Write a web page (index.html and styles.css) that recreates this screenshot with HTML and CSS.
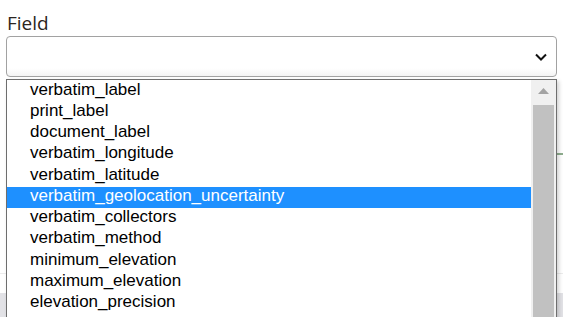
FILE: index.html
```html
<!DOCTYPE html>
<html>
<head>
<meta charset="utf-8">
<link rel="stylesheet" href="styles.css">
</head>
<body>
<div class="page">
  <div class="field-label">Field</div>
  <div class="select">
    <svg class="chevron" width="12" height="8" viewBox="0 0 12 8"><path d="M1 1.5 L6 6.5 L11 1.5" fill="none" stroke="#111" stroke-width="2"/></svg>
  </div>
  <div class="behind">
    <div class="rule-green"></div>
    <div class="rule-faint"></div>
    <div class="band"></div>
  </div>
  <div class="popup">
    <ul class="options">
      <li class="opt">verbatim_label</li>
      <li class="opt">print_label</li>
      <li class="opt">document_label</li>
      <li class="opt">verbatim_longitude</li>
      <li class="opt">verbatim_latitude</li>
      <li class="opt selected">verbatim_geolocation_uncertainty</li>
      <li class="opt">verbatim_collectors</li>
      <li class="opt">verbatim_method</li>
      <li class="opt">minimum_elevation</li>
      <li class="opt">maximum_elevation</li>
      <li class="opt">elevation_precision</li>
    </ul>
    <div class="scrollbar">
      <div class="sb-up"><svg width="11" height="6" viewBox="0 0 11 6"><path d="M0 6 L5.5 0 L11 6 Z" fill="#a3a3a3"/></svg></div>
      <div class="sb-thumb"></div>
    </div>
  </div>
</div>
</body>
</html>
```
FILE: styles.css
```css
html, body {
  margin: 0;
  padding: 0;
  background: #ffffff;
  overflow: hidden;
}
.page {
  position: relative;
  width: 563px;
  height: 317px;
  overflow: hidden;
}
.field-label {
  font-family: "Open Sans", "Noto Sans", sans-serif;
  font-size: 19px;
  line-height: 25px;
  color: #2b2520;
  padding: 11px 0 0 7px;
  height: 25px;
}
.select {
  box-sizing: border-box;
  margin-left: 6px;
  width: 551px;
  height: 41px;
  border: 1px solid #a2a2a2;
  border-radius: 4px;
  background: linear-gradient(#ffffff 80%, #f3f3f3);
  display: flex;
  align-items: center;
  justify-content: flex-end;
  padding-right: 9px;
}
.chevron { display: block; }
.behind {
  display: flex;
  flex-direction: column;
  align-items: flex-end;
}
.rule-green {
  margin-top: 76px;
  width: 10px;
  height: 2px;
  background: #8fae8f;
}
.rule-faint {
  margin-top: 118px;
  align-self: stretch;
  height: 1px;
  background: #ececec;
}
.band {
  margin-top: 19px;
  align-self: stretch;
  height: 30px;
  background: #e2e2e6;
}
.popup {
  position: absolute;
  top: 79px;
  left: 6px;
  width: 551px;
  height: 260px;
  box-sizing: border-box;
  border: 1px solid #6e6e6e;
  background: #ffffff;
  box-shadow: 2px 2px 4px rgba(0,0,0,0.18);
  display: flex;
  overflow: hidden;
}
.options {
  list-style: none;
  margin: 0;
  padding: 0.5px 0 0 0;
  flex: 1;
  font-family: "Liberation Sans", Arial, sans-serif;
  font-size: 17px;
  color: #000;
}
.opt {
  height: 21.25px;
  box-sizing: border-box;
  line-height: 17.9px;
  padding: 0 0 0 23px;
  white-space: nowrap;
  overflow: hidden;
}
.opt.selected {
  background: #1e90ff;
  color: #ffffff;
}
.scrollbar {
  width: 25px;
  background: #f0f0f0;
  display: flex;
  flex-direction: column;
}
.sb-up {
  height: 25px;
  display: flex;
  align-items: center;
  justify-content: center;
}
.sb-up svg { display: block; margin-top: -3px; }
.sb-thumb {
  margin: 0 2px 0 2px;
  flex: 1;
  background: #c1c1c1;
}
```
